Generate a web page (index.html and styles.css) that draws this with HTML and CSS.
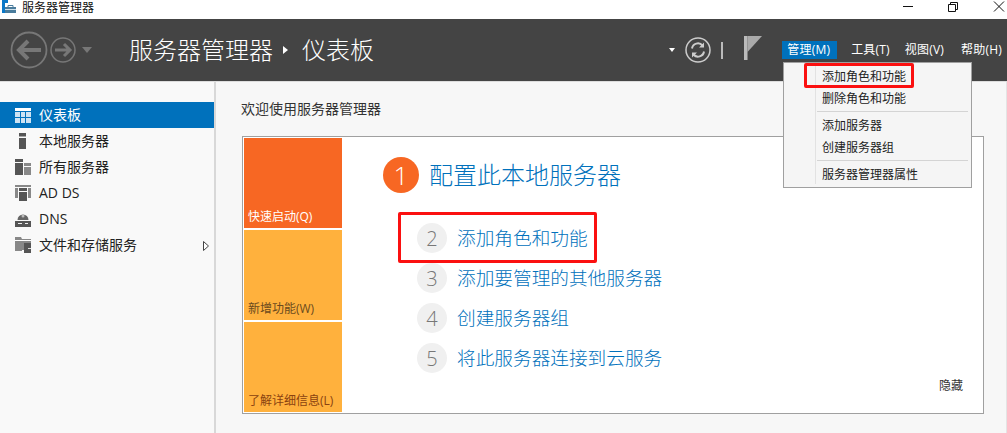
FILE: index.html
```html
<!DOCTYPE html>
<html lang="zh-CN">
<head>
<meta charset="utf-8">
<title>服务器管理器</title>
<link rel="stylesheet" href="styles.css">
</head>
<body>
<div class="app">
  <div class="titlebar">
    <svg class="app-icon" width="14" height="14" viewBox="0 0 14 14"><rect x="0" y="0" width="6" height="3" fill="#0a78c8"/><rect x="0" y="3" width="3" height="10" fill="#0a78c8"/><path d="M3 7h11v6H3z" fill="#4a7c9c"/><path d="M6 7V5.500h5V7" fill="none" stroke="#4a7c9c"/><rect x="3" y="9" width="11" height="1" fill="#cfe0ea"/></svg>
    <span class="app-title">服务器管理器</span>
    <div class="win-controls">
      <svg width="10" height="1" viewBox="0 0 10 1"><rect width="10" height="1" fill="#111"/></svg>
      <svg width="10" height="10" viewBox="0 0 10 10"><path d="M.5 2.500h7v7h-7zM2.500 2.500v-2h7v7h-2" fill="none" stroke="#111"/></svg>
      <svg width="12" height="11" viewBox="0 0 12 11"><path d="M1 .500l10 10M11 .500l-10 10" stroke="#111" fill="none"/></svg>
    </div>
  </div>
  <header class="header">
    <div class="nav">
      <svg class="nav-back" width="38" height="38" viewBox="0 0 38 38"><circle cx="19" cy="19" r="17.500" fill="none" stroke="#777" stroke-width="1.800"/><path d="M9 19h22M18 10l-9 9 9 9" fill="none" stroke="#777" stroke-width="4"/></svg>
      <svg class="nav-forward" width="26" height="26" viewBox="0 0 26 26"><circle cx="13" cy="13" r="12" fill="none" stroke="#777" stroke-width="1.500"/><path d="M5 13h15M14 7l6 6-6 6" fill="none" stroke="#777" stroke-width="3"/></svg>
      <span class="nav-caret"></span>
    </div>
    <div class="crumb"><span>服务器管理器</span><i class="crumb-sep"></i><span>仪表板</span></div>
    <div class="tools">
      <span class="tool-caret"></span>
      <svg class="refresh" width="26" height="26" viewBox="0 0 26 26"><circle cx="13" cy="13" r="12" fill="none" stroke="#ccc" stroke-width="1.500"/><path d="M7 11.500a6 6 0 0 1 10.500-3M19 14.500a6 6 0 0 1-10.500 3" fill="none" stroke="#ccc" stroke-width="2"/><path d="M19 5.500v5h-5zM7 20.500v-5h5z" fill="#ccc"/></svg>
      <span class="tool-bar"></span>
      <svg class="flag" width="18" height="24" viewBox="0 0 18 24"><rect width="3.500" height="24" fill="#bbb"/><path d="M3.500 0H18L3.500 16z" fill="#aaa"/></svg>
      <nav class="menus">
        <span class="menu active">管理(M)</span>
        <span class="menu">工具(T)</span>
        <span class="menu menu-view">视图(V)</span>
        <span class="menu">帮助(H)</span>
      </nav>
    </div>
  </header>
  <div class="main">
    <aside class="sidebar">
      <div class="side-item selected">
        <svg class="side-icon" width="16" height="15" viewBox="0 0 16 15"><path fill="#fff" d="M0 0h16v3H0z"/><path fill="#cde3f3" d="M0 4h5v5H0zM6 4h4v5H6zM11 4h5v5h-5zM0 10h5v5H0zM6 10h4v5H6zM11 10h5v5h-5z"/></svg>
        <span class="side-label">仪表板</span></div>
      <div class="side-item">
        <svg class="side-icon" width="16" height="16" viewBox="0 0 16 16"><path fill="#555" d="M4 0h7v3.500H4zM4 5h7v11H4z"/></svg>
        <span class="side-label">本地服务器</span></div>
      <div class="side-item">
        <svg class="side-icon" width="16" height="16" viewBox="0 0 16 16"><path fill="#555" d="M0 0h8v3H0zM0 4h8v12H0z"/><path fill="#888" d="M9 4h7v3H9zM9 8h7v8H9z"/></svg>
        <span class="side-label">所有服务器</span></div>
      <div class="side-item">
        <svg class="side-icon" width="16" height="16" viewBox="0 0 16 16"><path fill="#888" d="M0 0h16v2H0zM0 3h3v10H0zM13 3h3v10h-3z"/><path fill="#555" d="M4 3h8v3H4zM4 7h8v9H4z"/></svg>
        <span class="side-label">AD DS</span></div>
      <div class="side-item">
        <svg class="side-icon" width="16" height="16" viewBox="0 0 16 16"><path d="M2.500 9a5.500 5.500 0 1 1 11 0z" fill="#666"/><circle cx="8" cy="5" r="1.500" fill="#bbb"/><path fill="#555" d="M0 10h16v6H0z"/><path fill="#eee" d="M3 12h4v1H3zM10 12h3v1h-3z"/></svg>
        <span class="side-label">DNS</span></div>
      <div class="side-item">
        <svg class="side-icon" width="16" height="16" viewBox="0 0 16 16"><path fill="#888" d="M0 0h6l1 2h9v11H7v1H0z"/><path fill="#fff" d="M0 3h16v1H0z"/><path fill="#555" d="M9 6h7v10H9z"/><path fill="#ddd" d="M13 11h3v1h-3z"/></svg>
        <span class="side-label">文件和存储服务</span>
        <svg class="side-arrow" width="6" height="10" viewBox="0 0 6 10"><path d="M.5.500l5 4.500-5 4.500z" fill="#fff" stroke="#444"/></svg>
      </div>
    </aside>
    <main class="content">
      <h1 class="welcome">欢迎使用服务器管理器</h1>
      <section class="card">
        <div class="tiles">
          <div class="tile tile-start">快速启动(Q)</div>
          <div class="tile tile-new">新增功能(W)</div>
          <div class="tile tile-more">了解详细信息(L)</div>
        </div>
        <div class="steps">
          <div class="step-main"><span class="num num-main">1</span><span class="step-main-text">配置此本地服务器</span></div>
          <ol class="step-list">
            <li class="step"><span class="num">2</span><span class="step-text">添加角色和功能</span></li>
            <li class="step"><span class="num">3</span><span class="step-text">添加要管理的其他服务器</span></li>
            <li class="step"><span class="num">4</span><span class="step-text">创建服务器组</span></li>
            <li class="step"><span class="num">5</span><span class="step-text">将此服务器连接到云服务</span></li>
          </ol>
          <span class="hide-link">隐藏</span>
        </div>
        <div class="mark mark-step"></div>
      </section>
    </main>
  </div>
  <div class="dropdown">
    <div class="drop-item">添加角色和功能</div>
    <div class="drop-item">删除角色和功能</div>
    <hr class="drop-sep">
    <div class="drop-item">添加服务器</div>
    <div class="drop-item">创建服务器组</div>
    <hr class="drop-sep">
    <div class="drop-item">服务器管理器属性</div>
    <div class="mark mark-drop"></div>
  </div>
</div>
</body>
</html>
```
FILE: styles.css
```css
* { box-sizing: border-box; }
html, body { margin: 0; padding: 0; }
body { font-family: "Open Sans", "Noto Sans CJK SC", "Liberation Sans", sans-serif; background: #f7f7f7; overflow: hidden; }
.app { position: relative; width: 1007px; height: 433px; overflow: hidden; display: flex; flex-direction: column; }

.titlebar { height: 19px; background: #fff; display: flex; align-items: flex-start; flex: none; }
.app-icon { margin: 0 6px 0 2px; flex: none; }
.app-title { font-size: 12px; color: #111; line-height: 16px; }
.win-controls { margin-left: auto; margin-top: 1px; display: flex; align-items: center; gap: 35px; padding-right: 2px; height: 11px; }

.header { height: 63px; background: #444; border-bottom: 1px solid #ddd; display: flex; align-items: center; flex: none; }
.nav { display: flex; align-items: center; width: 129px; padding-left: 10px; flex: none; }
.nav-forward { margin-left: 2px; }
.nav-caret { width: 0; height: 0; margin-left: 6px; border: 5px solid transparent; border-top: 6px solid #777; border-bottom: 0; }
.crumb { display: flex; align-items: center; font-size: 24px; line-height: 32px; color: #fff; font-weight: 300; }
.crumb-sep { width: 0; height: 0; margin: 0 14px 0 10px; border: 4px solid transparent; border-left: 5px solid #fff; border-right: 0; }
.tools { margin-left: auto; display: flex; align-items: center; }
.tool-caret { width: 0; height: 0; margin-right: 10px; border: 3.500px solid transparent; border-top: 4px solid #fff; border-bottom: 0; }
.refresh { margin-right: 10px; }
.tool-bar { width: 2px; height: 17px; background: #bbb; margin-right: 21px; }
.flag { margin: 0 20px 4px 0; }
.menus { display: flex; align-items: center; }
.menu { font-size: 12px; line-height: 18px; color: #fff; padding: 0 5px; margin-right: 5px; letter-spacing: .2px; white-space: nowrap; }
.menu:last-child { margin-right: 0; }
.menu.active { background: #0071bc; padding-right: 7px; margin-right: 9px; }
.menu.menu-view { margin-right: 7px; }

.main { flex: 1; display: flex; min-height: 0; }
.sidebar { width: 216px; flex: none; background: #f9f9f9; border-right: 2px solid #d8d8d8; padding-top: 20px; }
.side-item { height: 26px; display: flex; align-items: center; font-size: 14px; color: #222; padding-left: 15px; position: relative; }
.side-item.selected { background: #0071bc; color: #fff; }
.side-icon { flex: none; margin-right: 8px; }
.side-label { padding-bottom: 2px; }
.side-arrow { position: absolute; left: 203px; top: 9px; }

.content { flex: 1; min-width: 0; background: #f7f7f7; padding: 0 0 0 26px; border-right: 1px solid #e4e4e4; }
.welcome { margin: 0 0 0 -1px; font-size: 14px; font-weight: 400; line-height: 18px; color: #333; padding-top: 18px; height: 54px; }
.card { position: relative; width: 742px; height: 278px; background: #fff; border: 1px solid #a0a0a0; display: flex; padding: 1px; }
.tiles { width: 98px; flex: none; display: flex; flex-direction: column; gap: 2px; }
.tile { flex: 1; font-size: 12px; line-height: 16px; padding: 0 0 3px 4px; display: flex; align-items: flex-end; white-space: nowrap; }
.tile-start { background: #f76723; color: #fff; }
.tile-new { background: #ffb13d; color: #6b4a1e; }
.tile-more { background: #ffb13d; color: #8a4210; }

.steps { position: relative; flex: 1; padding: 19px 0 0 41px; }
.step-main { display: flex; align-items: center; height: 36px; }
.num { width: 30px; height: 30px; border-radius: 50%; background: #f0f0f0; color: #777; font-size: 20px; display: flex; align-items: center; justify-content: center; flex: none; margin-right: 10px; font-weight: 300; }
.num-main { width: 36px; height: 36px; background: #f76723; color: #fff; font-size: 26px; margin-right: 10px; }
.step-main-text { font-size: 24px; color: #0071bc; line-height: 32px; font-weight: 300; }
.step-list { list-style: none; margin: 30px 0 0 34px; padding: 0; display: flex; flex-direction: column; gap: 10px; }
.step { display: flex; align-items: center; height: 30px; font-size: 18.67px; color: #0071bc; font-weight: 300; }
.step-text { padding-bottom: 4px; }
.hide-link { position: absolute; left: 597px; top: 240px; font-size: 12px; line-height: 16px; color: #333; }

.mark { position: absolute; border: 3px solid #fb1010; border-radius: 2px; pointer-events: none; }
.mark-step { left: 155px; top: 75px; width: 199px; height: 51px; }

.dropdown { position: absolute; left: 783px; top: 62px; width: 189px; background: linear-gradient(#e2e2e2, #e2e2e2) no-repeat 31px 3px / 1px calc(100% - 6px), #f5f5f5; border: 1px solid #a0a0a0; padding: 2px 3px; }
.drop-item { font-size: 12px; line-height: 22px; height: 22px; padding: 1px 0 0 35px; color: #222; }
.drop-sep { border: 0; border-top: 1px solid #d4d4d4; margin: 2px 0 2px 30px; }
.mark-drop { left: 20px; top: 0; width: 110px; height: 25px; }
```
